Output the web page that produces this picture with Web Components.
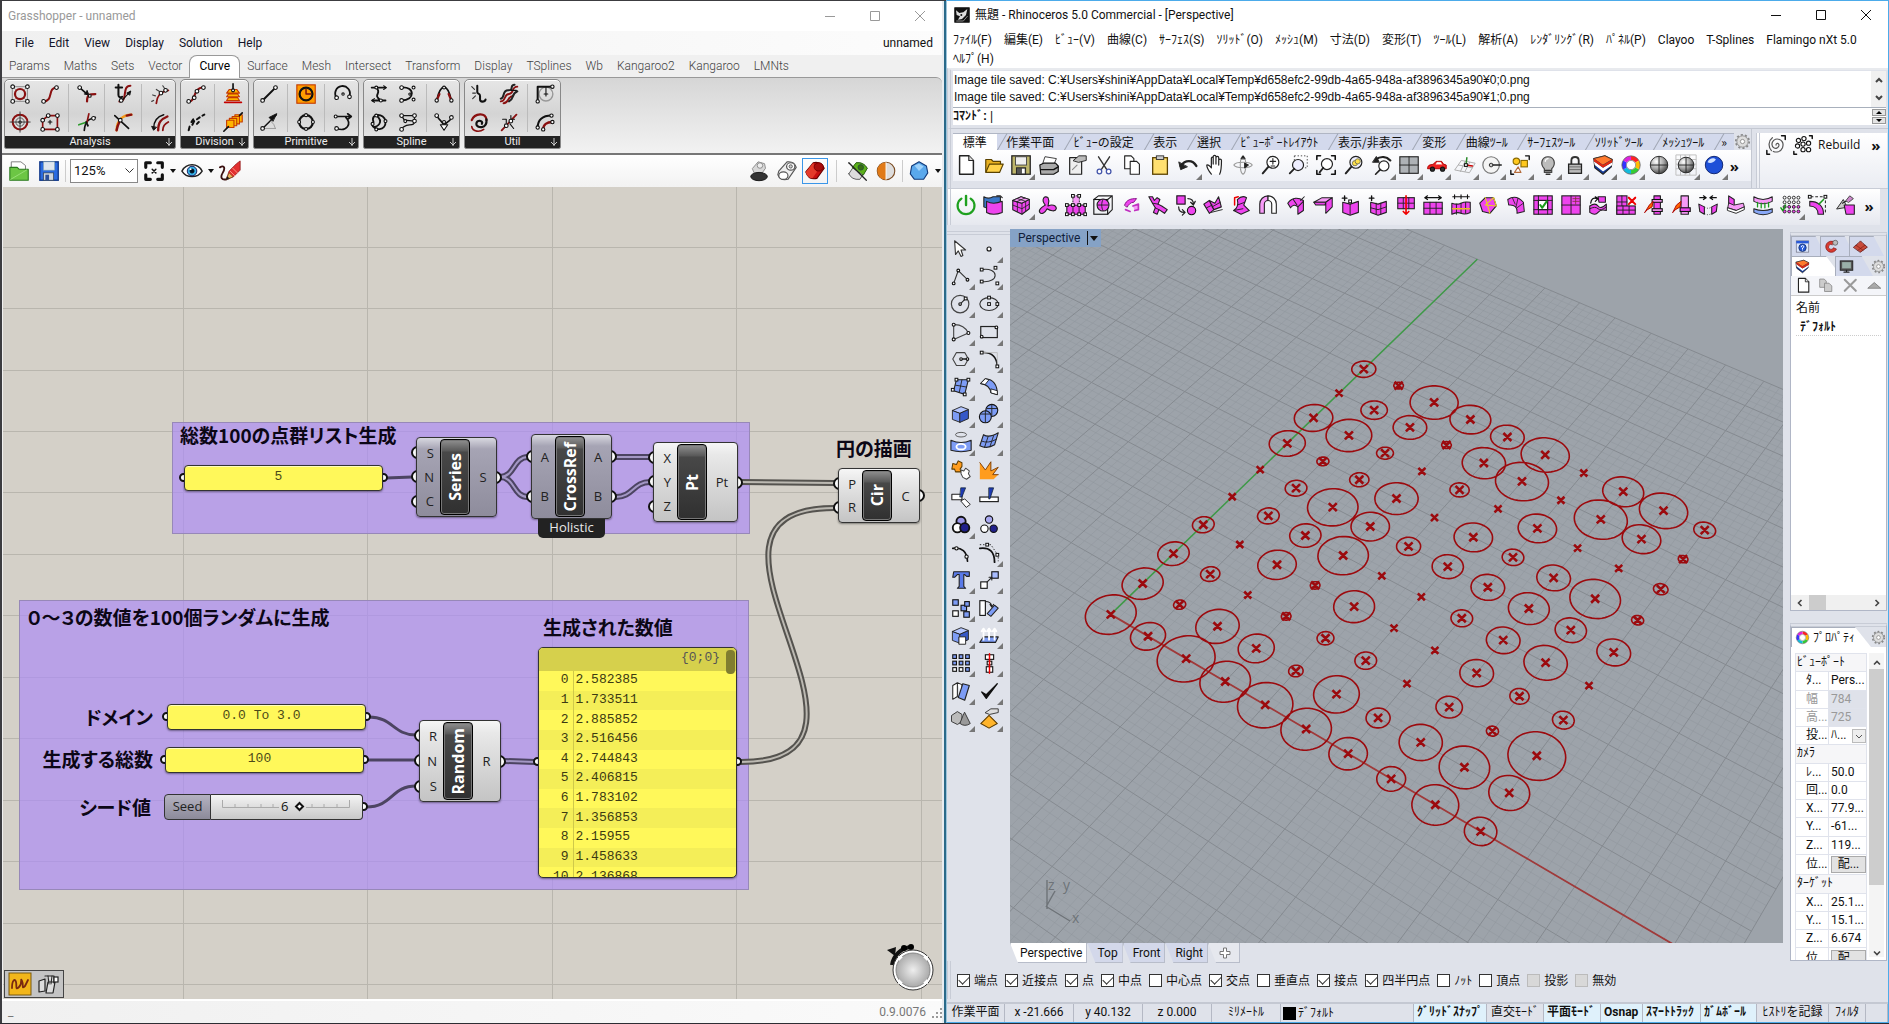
<!DOCTYPE html>
<html lang="ja">
<head>
<meta charset="utf-8">
<title>Grasshopper / Rhinoceros</title>
<style>
html,body{margin:0;height:100%}
body{display:flex;height:100vh;overflow:hidden;background:#2d2d33;font:12px/16px Roboto,"Noto Sans CJK JP",sans-serif;color:#111}
body>*{box-sizing:border-box}
gh-window{flex:1 1 946px;min-width:0}
rh-window{flex:1 1 943px;min-width:0}
</style>
</head>
<body>
<gh-window></gh-window>
<rh-window></rh-window>
<script>
/* ---------- drawing helpers for the icon set ---------- */
const P=(d,s='#111',w=1.8,f='none')=>`<path d="${d}" fill="${f}" stroke="${s}" stroke-width="${w}" stroke-linecap="round" stroke-linejoin="round"/>`;
const C=(x,y,r=2,f='#fff',s='#111',w=1.2)=>`<circle cx="${x}" cy="${y}" r="${r}" fill="${f}" stroke="${s}" stroke-width="${w}"/>`;
const R=(x,y,w,h,f='#fff',s='#111',k=1.2)=>`<rect x="${x}" y="${y}" width="${w}" height="${h}" fill="${f}" stroke="${s}" stroke-width="${k}"/>`;
const S=(x,y)=>R(x-1.5,y-1.5,3,3,'#fff','#111',1.1);
const RED='#8a1010',MG='#ee44ee',ML='#f79af7',MD='#b418b4',BL='#7d9cf5',BD='#3558c8';
const cube=(f1,f2,f3)=>P('M3 8L11 11V21L3 18Z','#222',1,f1)+P('M11 11L20 7V17L11 21Z','#222',1,f2)+P('M3 8L12 4L20 7L11 11Z','#222',1,f3);
const grid=(x,y,w,h,n,m,f=MG)=>{let o=R(x,y,w,h,f,'#222',1.2);for(let i=1;i<n;i++)o+=P(`M${x+w*i/n} ${y}V${y+h}`,'#222',1);for(let i=1;i<m;i++)o+=P(`M${x} ${y+h*i/m}H${x+w}`,'#222',1);return o};
const ICONS={
/* curve tab */
a1:P('M4 4L7 7M20 4L17 7M4 20L7 17M20 20L17 17M4 4H20V20H4Z','#888',1)+C(12,12,5.5,'none',RED,2.4)+C(4,4)+C(20,4)+C(4,20)+C(20,20),
a2:P('M5 20C16 20 9 5 19 5',RED,2.2)+C(5,20)+C(19,5),
a3:C(12,12,8,'none',RED,2.2)+C(12,12,4.5,'none','#555',1)+P('M12 1V23M1 12H23','#333',1)+C(12,12,1.2,'#fff'),
a4:P('M4 10L10 5H20V20H4Z',RED,1.8)+P('M10 12H14M12 10V14','#111',1.2)+C(4,10)+C(10,5)+C(20,5)+C(20,20)+C(4,20),
a5:P('M4 5L12 12')+P('M12 20C12 12 15 12 21 12',RED,2.4)+C(4,5)+P('M9 12L14 13L12 8','#111',1,'#111')+C(15,14,1.5),
a6:P('M9 21C10 10 14 9 21 7')+P('M12 12L3 15','#2a9a2a',1.8)+P('M12 12L14 3',RED,1.8)+C(19,8)+P('M11 12L13 16','#111',2),
a7:P('M8 20C18 20 10 3 20 3',RED,2.2)+P('M4 5H11M7 2V13C7 16 10 16 11 15','#111',2.2)+P('M10 20L20 9','#111',1.2)+P('M20 9L16 11L19 13Z','#111',1,'#111')+C(10,19),
a8:P('M5 21C5 10 12 4 21 4','#f39a1c',2.6)+P('M5 21C6 16 7 14 8 12M16 5L21 4',RED,2.6)+P('M3 5L18 19')+C(9,10),
a9:P('M8 22C9 12 14 9 21 8',RED,2)+P('M3 20L5 19M4 13L7 14M8 7L11 9M15 3L17 6','#444',1.3)+C(13,11)+C(18,8),
a10:P('M10 21C10 12 13 9 20 6',RED,2.6)+P('M5 19C5 10 9 6 16 4','#111',1.6)+P('M3 17L5 21L8 18Z','#111',1,'#111')+P('M15 21C15 16 17 14 21 12',RED,2),
b1:P('M4 20C12 21 8 5 20 5',RED,2.2)+C(4,20)+C(10,16)+C(13,9)+C(20,5),
b2:P('M4 21L5 17M8 15L10 11M13 9L16 7M19 5L21 4M7 12L9 9M13 14L15 12','#111',2.2),
b3:P('M5 19H19L17 16H7ZM5 15H19L17 12H7ZM5 11H19L16 7H8Z','#c43a00',1.2,'#ffb400')+P('M3 21H21','#c40000',2)+P('M12 8V1')+C(12,8,1.6),
b4:[0,1,2,3].map(i=>P(`M${5+i*3} ${10-i*2}H${13+i*3}V${18-i*2}H${5+i*3}Z`,'#c43a00',1.2,'#ffb400')).reverse().join('')+P('M2 22L7 17M19 5L22 2'),
c1:P('M5 19L19 5','#111',2.2)+C(5,19)+C(19,5),
c2:P('M5 19L20 4','#111',1.6)+P('M20 3L12 7L16 11Z','#111',1,'#111')+P('M5 19H19M19 19A14 14 0 0 0 14 11','#999',1)+C(5,19),
c3:R(2,2,20,20,'#ff9c00','#c43a00',1.2)+C(12,12,7,'none','#111',2.4)+P('M12 7V12H17','#7a1010',1.6),
c4:C(12,12,7.5,'none','#111',2.4)+C(12,4.5,1.6)+C(4.5,12,1.6)+C(19.5,12,1.6)+C(12,19.5,1.6),
c5:P('M5 16A8 8 0 1 1 19 14','#111',2)+C(5,16)+C(19,15)+C(12,12,1.3),
c6:P('M4 6H20M17 3L21 6L17 9M15 7C22 14 16 23 5 19')+C(5,19)+C(4,6,1.6),
d1:P('M4 5H19M19 19H5M9 5C16 12 4 12 14 19','#111',2)+P('M17 3L20 5L17 7M7 17L4 19L7 21','#111',1.2)+C(9,5,1.6)+C(14,19,1.6),
d2:P('M4 5C20 3 20 19 5 19','#111',2)+C(5,5)+C(18,5,1.6)+C(18,18,1.6)+C(5,19)+C(14,12,1.2),
d3:P('M6 12C2 2 18 2 19 11C20 22 6 22 4 14M9 5C18 12 10 18 6 17','#111',2)+C(9,5,1.6)+C(19,11,1.6)+C(9,20,1.6)+C(5,14,1.6),
d4:P('M5 20C8 12 20 18 19 11M5 5H19V11L8 10Z','#111',1.4)+C(5,5)+C(19,5)+C(19,11)+C(5,20)+C(9,11,1.6),
d5:P('M4 19C8 0 16 0 20 19')+P('M4 19L7 12M20 19L17 12',RED,2.4)+C(4,19,1.8)+C(20,19,1.8)+C(12,5,1.6),
d6:P('M4 5C8 12 12 12 12 17C12 12 16 14 20 8')+P('M8 15L12 21L16 15Z','#111',1.2,'#fff')+C(4,5)+C(20,7)+C(12,12,1.6),
e1:P('M9 3V10C9 12 12 11 12 14V18C12 21 17 21 18 18','#111',2.2)+P('M3 4L6 7M4 17L7 14M4 11H7','#333',1.2),
e2:P('M3 20C9 20 6 12 12 12S14 4 21 4M6 22C12 22 10 15 16 14',RED,2)+P('M3 17C8 16 4 8 11 8S12 2 18 2M12 20C18 17 14 12 21 9','#222',2.2)+P('M14 8L20 8','#111',1.4),
e3:P('M3 10C6 2 19 1 19 10',RED,2.4)+P('M19 9C20 20 8 19 8 14C8 9 16 10 14 14','#111',2.4)+P('M3 17C4 23 12 23 16 20',RED,1.8),
e4:P('M4 21L20 4',RED,2)+P('M5 9L9 9L9 13M18 9H14V5M13 14L17 19','#111',1.2)+C(9,16)+C(14,11),
e5:C(13,12,7.5,'none','#999',1.5)+P('M4 4H20M4 4V20','#111',2.2)+P('M11 12H15M13 5V14','#111',1.2)+C(20,4,1.8)+C(4,20,1.8),
e6:P('M4 18C4 10 9 5 19 5','#111',2.2)+P('M10 20C10 15 14 12 20 12',RED,2.6)+C(4,18,1.8)+C(19,5,1.8)+C(10,20,1.8)+C(20,12,1.8),
/* canvas toolbar */
open:P('M4 2H14L19 6V20H4Z','#777',1,'#fff')+P('M2 8H10L12 10H22V22H2Z','#2b7a1f',1.2,'#6cc644')+P('M3 21L20 11','#9be07a',1),
save:R(2,2,20,20,'#2b6be0','#123a8a',1.5)+R(6,2,12,9,'#dfe6ee','#8aa',.6)+R(6,14,11,8,'#cfd6de','#345',.8)+R(8,16,4,6,'#2b4f9a','none',0),
fit:P('M3 8V3H8M16 3H21V8M21 16V21H16M8 21H3V16','#111',3.4)+P('M10 10L14 14M14 10L10 14','#111',1.6),
eye:P('M1 12C6 3 18 3 23 12C18 20 6 20 1 12Z','#222',1.6,'#fff')+C(12,12,5.2,'#35b0e6','#115',1)+C(12,12,2.2,'#012','#012',1)+C(10.4,10,1,'#fff','none',0),
pen:P('M1 8C6 5 7 9 4 14C1 19 3 22 8 21','#3a1010',2)+P('M8 21L11 12L19 4L23 1L23 11L16 18Z','#8a1010',.8,'#e23030')+P('M15 9L20 14M12 12L17 17','#ff9a8a',1)+P('M8 21L11 14L15 18Z','#6a4a10',.6,'#e8b860')+P('M8 21L9 18L11 20Z','#111',.6,'#111'),
sh1:P('M5 9L11 2L18 4L19 9L14 16L7 14Z','#888',1,'#d8d8d8')+C(13,6,3,'#eee','#888',1)+`<ellipse cx="12" cy="18" rx="9" ry="4.5" fill="#333" stroke="#111"/>`,
sh2:P('M3 12L12 2Q20 1 22 8L13 21Q5 23 2 16Z','#555',1.2,'#eee')+`<ellipse cx="16" cy="7" rx="4.5" ry="4" fill="#fff" stroke="#555" stroke-width="1.3"/><ellipse cx="8" cy="17" rx="5" ry="4" fill="#fff" stroke="#555" stroke-width="1.3"/>`+C(16,7,1.8,'#ccc','#555',1),
sh3:P('M2 13L10 3Q18 1 22 9L14 20Q5 22 2 13Z','#600',1.2,'#c81010')+P('M2 13L10 3L14 13L9 20Q3 19 2 13Z','none',0,'#e43a2a')+`<ellipse cx="16" cy="7.5" rx="5" ry="4.5" fill="#a80c0c" stroke="#700"/>`,
sh4:P('M2 15L10 3Q18 2 22 9L14 21Q5 22 2 15Z','#555',1,'#ddd')+P('M6 8L10 3Q18 2 22 9L18 16Z','#2b6a10',1,'#5cb01a')+C(15,8,3,'#376d12','#244',.8)+P('M2 3L21 22','#222',1.4),
sh5:C(12,12,9.5,'#ddd','#7a4a20',1.2)+P('M12 2.5A9.5 9.5 0 0 0 12 21.5Z','none',0,'#e07a18')+P('M12 3V21','#fff',1),
hex:P('M12 2L20 6.5L21.5 14L17 21L7 21L2.5 15L4 6.5Z','#123a7a',1.2,'#5aa8ec')+P('M7 6L12 4L17 7L12 12Z','none',0,'#9fd2fa'),
wgt1:R(1,1,22,22,'#f2b61a','#7a5a10',1)+P('M4 16C4 8 7 6 8 10S7 19 11 15S12 5 14 9S13 18 17 14L20 8','#7a2a10',1.8),
wgt2:P('M3 9L9 7V19L3 20ZM9 4H18V11M12 10H19L17 21H10L12 10Z','#222',1.2,'#ddd')+P('M12 4L13 12M16 4L15 12','#222',1)+R(18,5,4,5,'#fff','#222'),
/* rhino logo */
rhino:R(1,1,22,22,'#111','#111',1)+P('M3 5L8 9L14 8L20 3L18 12L12 18L6 19L9 14L4 12Z','none',0,'#ddd')+C(11,12,1.5,'#111','#111',0)+P('M4 21H14L20 14','#888',1.5),
/* standard toolbar */
new:P('M5 2H15L20 7V22H5Z','#222',1.6,'#fff')+P('M15 2V7H20','#222',1.2,'#ddd'),
folder:P('M3 19V6H9L11 8H19V11','#5a4200',1.3,'#e8b020')+P('M3 20L7 11H22L18 20Z','#5a4200',1.3,'#ffd24a'),
disk:R(2,2,20,20,'#bdb56a','#222',1.4)+R(6,3,12,9,'#eee','#444',1)+R(7,15,10,7,'#555','#222',1)+R(13,16,3,5,'#fff','none',0),
print:P('M8 3L20 5L17 12H5Z','#333',1,'#fff')+P('M2 12L6 10H19L22 13V19L17 22H3Z','#111',1.3,'#aaa')+P('M3 17H17L22 14','#111',1.6),
props:P('M4 4H17V22H4Z','#222',1.3,'#eee')+P('M8 7L14 2H22V7L14 9Z','#222',1,'#bbb')+P('M7 17L12 12','#888',1.2),
cut:P('M6 3L15 17M18 3L9 17','#333',1.5)+C(7,19,2.5,'#fff','#45a',1.4)+C(17,19,2.5,'#fff','#45a',1.4),
copy:P('M4 2H11L14 5V16H4Z','#222',1.2,'#fff')+P('M10 8H17L20 11V22H10Z','#222',1.2,'#fff'),
paste:R(4,4,16,18,'#ffe070','#5a4200',1.4)+R(8,2,8,4,'#ccc','#333',1),
undo:P('M4 13C9 6 17 6 21 13','#222',2.6)+P('M2 9L4 17L11 14Z','#222',1,'#222'),
hand:P('M8 22C4 17 3 14 3 12C5 11 6 13 8 15V5C8 3 10 3 10 5V11V3C10 1 13 1 13 3V11V4C13 2 16 2 16 4V12V7C16 5 19 5 19 7C19 14 19 18 17 22','#222',1.3,'#fff'),
orbit:P('M12 2C16 4 16 20 12 22C8 20 8 4 12 2ZM2 12C4 8 20 8 22 12C20 16 4 16 2 12Z','#999',1.2)+P('M14 10L18 12L14 15ZM10 5L12 2L14 5Z','#222',1,'#222'),
zoom:C(14,9,6.5,'#fff','#222',1.3)+P('M9 14L3 21','#222',2.2)+P('M11 8H17M14 5V11M12 13H16','#222',1.2),
zoomw:`<rect x="8" y="2" width="14" height="13" fill="none" stroke="#444" stroke-dasharray="1.5 2"/>`+C(12,12,6,'#eef','#222',1.3)+P('M8 16L3 21','#222',2),
zoome:C(13,11,6,'#fff','#222',1.3)+P('M9 15L5 20','#222',2)+P('M2 6V2H6M18 2H22V6M22 18V22H18M2 18V22H6','#111',1.7),
zooms:C(14,9,6.5,'#eef','#222',1.3)+P('M9 14L3 21','#222',2.2)+C(13,10,2.8,'#ffe04a','#775',1)+C(16,8,2.8,'#ffe04a','#775',1),
zoomp:C(14,13,5.5,'#fff','#222',1.3)+P('M10 17L5 22','#222',1.8)+P('M5 6C11 2 17 3 21 7','#222',2.4)+P('M2 9L9 9L6 3Z','#222',1,'#222'),
four:grid(2,3,20,18,2,2,'#aeb2b6'),
car:P('M2 14C3 11 6 12 8 11L11 8H17L19 11L22 12V16H2Z','#a00',1,'#e22')+C(7,16.5,2.2,'#333')+C(18,16.5,2.2,'#333')+P('M11 11L12 9H16L17 11Z','#fff',.5,'#fff'),
cplane:P('M1 17L8 7L23 10L17 20ZM5 12L20 15M12 8L7 19M17 9L12 19','#aaa',1)+P('M13 12L20 13','#c00',1.6)+P('M13 12L14 4','#2a8a2a',1.6)+S(13,12),
setpt:C(11,12,9,'#f4f4f4','#777',1.3)+C(11,12,2,'#ccc','#222',1)+P('M13 12H22','#222',1.6),
shapes:C(8,8,3.5,'#ffc81e','#8a6a00')+R(13,7,7,7,'#ffc81e','#8a6a00')+P('M6 20L10 14L13 20Z','#b46a3a',1.2,'#fff')+P('M18 2H22V6M2 18V22H5','#111',1.5),
bulb:P('M8 16C3 11 5 3 12 3S21 11 16 16V20H8Z','#444',1.3,'#bcbcbc')+P('M9 18H15M10 22H14','#333',1.6)+P('M9 8C9 6 11 5 12 5','#fff',1.4),
lock:P('M8 11V7C8 2 16 2 16 7V11','#333',2)+R(5,11,14,10,'#bbb','#222',1.4)+P('M6 14H18M6 17H18','#666',1),
layer:P('M2 5L14 2L22 6L21 14L12 22L3 15Z','#222',1.2,'#123a9a')+P('M2 8L12 15L22 9V12L12 19L3 12Z','none',0,'#fff')+P('M2 5L14 2L22 6L12 12Z','#222',.6,'#ff7a2e')+P('M2 5L12 12L12 15L2 8ZM22 6L12 12V15L22 9Z','none',0,'#e02a10'),
wheel:['#f22 0','#fb0 60','#3c3 120','#1bd 180','#33f 240','#d2d 300'].map(t=>{const[c,a]=t.split(' ');return `<path d="M12 4.5A7.5 7.5 0 0 1 18.5 8.25" fill="none" stroke="${c}" stroke-width="4.5" transform="rotate(${a} 12 12)"/>`}).join('')+C(12,12,10,'none','#555',.8)+C(12,12,5,'#fff','#777',.8),
sph1:C(12,12,9.5,'url(#gs)','#222',1)+P('M12 3V21M3 12H21','#222',1),
sph2:`<path d="M1 1H23V23H1ZM1 6H23M1 11H23M1 16H23M6 1V23M11 1V23M16 1V23" fill="none" stroke="#bbb"/>`+C(12,12,8.5,'url(#gs)','#222',1)+P('M12 4V20M4 12H20','#222',1),
sph3:C(12,12,9.5,'#1e50d8','#0a1f6a',1)+P('M5 9C7 4 12 4 14 6C12 9 8 11 5 9Z','none',0,'#cfe0ff'),
gear:C(12,12,8,'#ddd','#777',1)+`<circle cx="12" cy="12" r="9.5" fill="none" stroke="#888" stroke-width="2.4" stroke-dasharray="3 3"/>`+C(12,12,3,'#fff','#777',1),
swirl:P('M12 12C12 9 16 10 15 13C13 18 6 15 8 9C11 2 22 6 19 15C17 20 12 20 9 19M7 18C3 14 4 7 8 4','#555',1.3)+P('M18 2H22V6M2 18V22H5','#111',1.6),
dots:C(7,7,2.3)+C(13,5,2.3)+C(6,13,2.3)+C(12,11,2.3)+C(18,10,2.3)+C(12,17,2.3)+C(18,17,2.3)+P('M19 2H22V5M2 19V22H5','#111',1.6),
/* t-splines toolbar */
t1:P('M7 5A9.2 9.2 0 1 0 17 5','#1ea01e',2.4)+P('M12 2V12','#1ea01e',2.6),
t2:P('M2 3Q7 6 12 3L20 3V12L8 16Q4 15 2 14Z','#222',1.2,'#3c78c8')+P('M5 8Q12 12 22 8V20Q12 24 5 20Z','#222',1.2,MG)+P('M16 2H20L22 4','#222',1.2),
t3:P('M3 7L12 3L21 6V16L13 22L3 17Z','#222',1.2,MG)+P('M3 7L12 3L21 6L13 10Z','#222',1,ML)+P('M3 7L13 10L21 6M13 10V22M3 12L13 16L21 11M8 8.5V19M17 8V19M8 5L17 8M7 8.5L16 4.5','#222',.9),
t4:P('M9 12C4 6 8 1 12 4C14 8 12 11 12 13C16 11 21 12 21 16C20 20 14 18 11 16C9 20 5 23 3 20C1 17 6 14 9 12Z','#222',1.2,MG),
t5:grid(2,12,20,10,3,1)+`<rect x="8.6" y="2" width="7" height="10" fill="${ML}" stroke="#222" stroke-dasharray="2 1"/>`+[2,8.6,15.4,22].map(x=>S(x,12)+S(x,22)).join('')+S(8.6,2)+S(15.4,2),
t6:R(2,6,15,16,'none')+P('M2 6L7 2H22V17L17 22M17 6L22 2','#222',1.2)+C(12,12,6.5,MG,'#222',1.2)+P('M6 12H18M12 6C10 9 10 15 12 18','#222',1),
t7:P('M5 12C7 6 12 5 18 5L15 9C11 9 9 12 8 14Z','#801080',1,MG)+P('M14 13L20 11V17L16 18M6 17L11 19','#c030c0',1.8,ML),
t8:P('M2 3L6 3L8 7L11 4L14 6L12 11L16 13L22 17L19 21L13 17L11 22L7 20L9 15L6 10Z','#222',1.2,MG)+P('M6 10L12 11M9 15L13 17','#222',1),
t9:R(2,2,9,9,MG)+C(18,18,4.5,MG)+P('M14 5Q20 5 20 11M17 9L20 12L22 8M4 14Q4 20 10 20M8 17L11 20L8 23','#222',1.3),
t10:P('M2 11L8 7L13 17L8 21Z','#222',1.2,MG)+P('M8 7L14 10L18 3L21 14L13 17Z','#222',1.2,MG)+P('M5 15L11 12M11 14L20 9M10 20L22 17','#222',1),
t11:P('M4 18Q10 14 8 6Q13 1 18 4L15 12L21 18L12 22Z','#222',1.2,MG)+P('M8 12L16 9M4 18L14 16','#222',1)+P('M5 12V4L9 3','#e00',1.6),
t12:P('M3 21V11A9 9 0 0 1 12 2V7A4 4 0 0 0 8 11V21Z','#222',1.2,ML)+P('M21 21V11A9 9 0 0 0 12 2V7A4 4 0 0 1 16 11V21Z','#222',1.2,'#fff'),
t13:P('M3 10C8 3 15 4 20 7V18L14 22V14C11 11 8 12 6 15Z','#222',1.2,MG)+P('M9 6L13 12M14 14L20 8M17 7L21 3','#222',1.1),
t14:P('M2 9L11 4H22L15 9Z','#222',1.1,ML)+P('M2 9H15L14 12H4ZM15 9L22 4V14L15 21Z','#222',1.1,MG),
t15:P('M3 9L11 11L20 8V20L11 23L3 20Z','#222',1.2,MG)+P('M11 11V22','#222',1)+P('M5 2V7M2.5 4.5H7.5','#111',1.5)+S(11,8),
t16:P('M4 9L12 11L21 8V20L12 23L4 20Z','#222',1.2,MG)+P('M10 10V22M15 10V22M4 15L12 17L21 14','#222',1)+P('M5 2V7M2.5 4.5H7.5','#111',1.5),
t17:grid(3,4,18,12,3,2)+P('M12 2V22M9 19L12 22L15 19','#e00',1.8),
t18:grid(2,9,20,13,3,2)+P('M4 4H20M6 2L3 4L6 6M18 2L21 4L18 6','#111',1.3),
t19:P('M2 10Q8 12 12 10T22 9V20Q16 23 12 21T2 22Z','#222',1.2,MG)+P('M7 11V22M12 10V21M17 9V21','#222',1)+P('M3 16H21','#e8c020',1.6)+P('M3 3H21M5 1V5M12 1V5M19 1V5','#111',1.2),
t20:P('M3 10L9 4H18L21 13L14 21L6 19Z','#222',1.2,MG)+P('M9 4L14 21M9 12L18 4L21 13L9 12','#e8d020',1.2),
t21:P('M3 6Q12 0 20 9L21 19L13 21Q14 11 4 12Z','#222',1.1,MG)+P('M8 4L11 11M14 5L12 14M20 10L13 15','#222',.9),
t22:grid(2,2,20,20,1,1)+R(7,7,10,10,'#fff')+P('M2 7H22M2 17H22M7 2V22M17 2V22','#222',1)+P('M9 12L11 15L16 8','#1a9a1a',2.2),
t23:grid(2,2,20,20,2,2)+P('M14 5H21M14 8H21M17 3V11','#733',.8),
t24:P('M3 13Q9 9 12 13T21 11V18Q15 16 12 20T3 20ZM12 3H20V9H13Z','#222',1.2,MG)+P('M3 16Q9 13 12 16T21 14','#222',1)+P('M4 10Q5 3 11 5M9 3L12 5L9 8','#111',1.3),
t25:grid(2,2,11,20,2,3)+grid(2,13,20,9,3,2)+P('M15 4L22 11M22 4L15 11','#e00',2.2),
t26:P('M13 2H20V22H13Z','#222',1.2,MG)+R(11,6,11,3,ML)+R(11,16,11,3,ML)+P('M3 20L8 12L12 8L11 14L6 17Z','#a00',1,'#f60'),
t27:P('M12 2H20V22H12Z','#222',1.2,ML)+R(11,15,11,4,MG)+P('M3 20L7 12L12 8L11 14L6 17Z','#a00',1,'#f60'),
t28:P('M2 11L8 14V22L3 19ZM22 11L16 14V22L21 19Z','#222',1.2,MG)+`<path d="M8 14Q12 17 16 14M8 21Q12 24 16 21" fill="none" stroke="#222" stroke-dasharray="1 2"/>`+P('M3 4H9M7 2L10 4L7 6M21 4H15M17 2L14 4L17 6','#111',1.3),
t29:P('M4 2L10 6V14L4 10Z','#222',1.2,MG)+P('M10 12L20 10L21 14L13 18L3 15L4 10Z','#222',1,ML)+P('M3 15L12 18L21 14V17L12 21L3 18Z','#222',1,'#fff'),
t30:P('M2 3Q12 9 22 3V8Q12 13 2 8Z','#222',1.1,ML)+P('M2 16Q12 20 22 16V20Q12 25 2 20Z','#222',1.1,'#88a8f8')+P('M6 9V14M10 10V15M14 10V15M18 9V14','#1a9a1a',1.4),
t31:[0,1,2,3].map(i=>[0,1,2,3].map(j=>C(5+i*5,4+j*5,1.6,j>1?MG:'#fff','#222',1)).join('')).join('')+P('M1 15L3 18L6 12','#1a9a1a',1.6),
t32:P('M3 8C12 8 18 13 18 22H12C12 17 9 13 3 13Z','#222',1.2,MG)+`<path d="M4 3H20V20" fill="none" stroke="#111" stroke-dasharray="3 2"/>`+S(3,3)+S(20,3)+P('M13 11L18 6','#1a9a1a',1.6),
t33:P('M2 16L9 6L13 14Z','#222',1,'#ccc')+P('M10 12H21V22H12Z','#222',1.2,MG)+P('M12 7L16 2L20 5L15 9Z','#444',1,'#c8c')+P('M8 10L12 8','#222',1.2),
/* side toolbar */
s1:P('M5 3L6 18L9 14L12 20L14 19L12 13H17Z','#333',1.2,'#fff'), s2:C(12,12,2.2),
s3:P('M4 20L9 6L19 16','#333',1.2)+C(4,20,1.5)+C(9,6,1.5)+C(19,16,1.5), s4:P('M4 5C23 2 24 20 4 18','#333',1.2)+S(4,5)+S(19,3)+S(4,18)+S(21,20),
s5:C(11,12,9.5,'none','#444',1.3)+P('M11 12L17 6','#222',1.2)+C(11,12,1.4)+S(17,6), s6:`<ellipse cx="12" cy="12" rx="10" ry="7" fill="none" stroke="#333" stroke-width="1.2"/>`+S(12,5)+S(12,12)+S(21,12),
s7:P('M4 4V20L20 13A17 17 0 0 0 4 4','#444',1.2)+C(4,4,1.6)+C(4,20,1.6)+C(20,13,1.6), s8:R(3,6,18,12,'none','#222',1.3)+C(4,17,1.5)+C(20,7,1.5),
s9:P('M3 12L7 5H16L20 12L16 19H7Z','#444',1.2)+P('M12 12H19','#222',1.6)+C(12,12,1.4)+C(19,12,1.4), s10:P('M4 5Q20 4 21 20','#111',1.8)+P('M4 5H21V20','#bbb',1)+S(4,5)+S(21,20),
s11:P('M7 4L20 4L16 20L4 16Z','#222',1.2,BL)+P('M13 4L10 18M6 10L18 12','#222',1)+S(7,4)+S(20,4)+S(16,20)+S(3,15), s12:P('M3 8L8 3Q21 4 21 20L14 18Q13 10 3 8Z','#222',1.2,BL)+P('M3 8L8 3L12 4L8 9Z','#222',1,'#fff')+P('M14 18V14L21 16V20Z','#222',1,'#fff'),
s13:cube(BL,BD,'#b4c6ff'), s14:C(15,8,6.5,BL)+C(8,15,6.5,BL)+P('M3 12H14M8 9V21M10 6H21M15 2V13','#222',1),
s15:`<ellipse cx="12" cy="4" rx="6" ry="2.5" fill="none" stroke="#555"/>`+P('M1 10Q12 15 23 10V21Q12 24 1 21Z','#222',1.2,BL)+`<ellipse cx="12" cy="17" rx="5" ry="3" fill="${BL}" stroke="#fff" stroke-width="2"/>`, s16:P('M6 4Q12 8 22 2L18 15Q10 20 2 16Z','#222',1.2,BL)+P('M11 6L7 18M17 5L13 17M4 11Q11 14 20 9','#222',1),
s17:P('M3 5L7 6L9 2L13 4L13 8L11 11L12 14L6 14L5 11L2 11Z','#5a3a00',1.1,'#ff9c1e')+P('M12 12L15 13L17 10L21 13L20 16L22 19L18 22L14 20L12 16Z','#444',1.1,'#fff'), s18:P('M2 22V4L8 12L14 3L14 13L22 9L16 17H22L17 22Z','none',0,'#ff9c1e')+P('M2 4L8 12L14 3L14 13L22 9L16 17H22','#7a3a00',1),
s19:P('M2 9H13V15H2Z','#222',1.2,'#fff')+P('M12 16L16 14L22 20L18 23Z','#222',1,'#fff')+P('M12 2H17L13 12H11Z','#123',.8,'#1e3ab4'), s20:R(2,12,20,5)+P('M12 2H17L13 14H12Z','#123',.8,'#1e3ab4'),
s21:C(12,8,5,'#9a96e8','#111',2)+C(8,15,5,'#fff','#111',2)+C(16,15,5,'#20208a','#111',2), s22:C(12,6,4,'#a8a8f0')+C(7,16,4)+C(17,16,4,'#20208a'),
s23:P('M3 8Q18 6 19 22','#111',1.8)+C(7,8,1.8)+C(18,17,1.8), s24:P('M2 8Q18 6 18 23','#111',2)+`<path d="M2 4H14L22 16V22" fill="none" stroke="#222" stroke-dasharray="1.5 2"/>`+S(10,4)+S(21,15),
s25:P('M3 9L4 3H21V8H18L16 6H15V19L17 21H8L10 19V6H8L5 9Z','#222',1.2,'#5a7ae8'), s26:R(3,14,7,7)+R(15,3,7,7,'#a8bcff')+P('M10 14L15 9M12 9H15V12','#222',1.2),
s27:R(3,3,6,6,BL)+R(3,15,6,6)+R(12,9,6,6,BL)+R(16,5,5,5,BL)+R(15,16,6,6,BL), s28:R(2,4,6,16)+P('M8 5Q14 5 15 10M13 8L15 11L17 8','#222',1.1)+P('M10 18L18 9L22 12L14 21Z','#222',1.1,BL),
s29:cube(BL,BD,'#b4c6ff')+P('M10 14H17V22H10Z','#222',1,'#fff'), s30:P('M2 20L6 14H22L19 20Z','#222',1.2,BL)+P('M6 17V6M12 17V6M18 17V6M4 8L6 5L8 8M10 8L12 5L14 8M16 8L18 5L20 8','#fff',2),
s31:[0,1,2].map(i=>[0,1,2].map(j=>R(3+i*7,3+j*7,4,4,(i<2&&j>1)?'#fff':BL)).join('')).join(''), s32:R(8,3,9,5)+R(10,10,5,4)+R(9,16,7,6)+P('M12.5 2V23','#e00',1.6),
s33:P('M3 6L8 3V18L3 21ZM8 3L13 5V18','#222',1.1,'#fff')+P('M14 4L21 6L16 22L9 19Z','#222',1.2,BL), s34:P('M4 13L9 20L21 4L9 16Z','#111',1.4,'#111'),
s35:P('M2 9L8 5L13 8V16L8 19L2 16Z','#333',1,'#bbb')+P('M16 6L22 18Q16 22 11 18Z','#333',1,'#999'), s36:P('M3 18L12 9L21 18L12 23Z','#5a3a00',1.1,'#ffb42a')+P('M8 6L14 2H22V6L13 8Z','#333',1,'#ddd'),
/* docked panel */
help:R(2,3,20,18,'#dde8ff','#667',1)+R(2,3,20,4,'#2a5ad8','none',0)+C(12,14,6,'#2458d8','#124',1)+P('M10 12.5Q10 10.5 12 10.5T14 12.5Q14 13.6 12 14.4V15.4M12 17.4V17.6','#fff',1.6),
magnet:P('M17 5A9 9 0 1 0 20 16L15 14A4 4 0 1 1 13 9Z','#7a1010',1,'#d83a30')+C(18,6,4,'#bbb','#444',1),
patch:P('M1 13L8 7L12 3L16 7L23 13L12 21Z','#5a1010',1.2,'#c84a3a')+P('M5 10L16 18M19 10L8 18','#7a1a10',1),
screen:R(2,3,20,15,'#555','#222',1.5)+R(5,5,14,10,'#9ab0a8','none',0)+P('M8 21H16M12 18V21','#222',2),
dup:P('M3 3H9L12 6V15H3Z','#888',1.2,'#ccc')+P('M10 9H16L20 13V21H10Z','#888',1.2,'#ccc'),
del:P('M4 4L20 20M20 4L4 20','#9a9a9a',3), up:P('M3 16L12 8L21 16Z','#777',1.2,'#aaa')
};
const DEFS='<defs><radialGradient id="gs" cx=".35" cy=".3" r=".8"><stop offset="0" stop-color="#fff"/><stop offset=".5" stop-color="#aaa"/><stop offset="1" stop-color="#333"/></radialGradient></defs>';
const svg=n=>`<svg viewBox="0 0 24 24" aria-hidden="true">${DEFS}${ICONS[n]||''}</svg>`;

/* one place to register an element from its style and markup */
function element(name,css,html){
  const t=document.createElement('template');
  customElements.define(name,class extends HTMLElement{
    connectedCallback(){
      if(this.shadowRoot)return;
      const root=this.attachShadow({mode:'open'});
      t.innerHTML=`<style>*{box-sizing:border-box}button,input,select{font:inherit;color:inherit}button{border:0;background:none;padding:0;margin:0}${css}</style>${typeof html==='function'?html(this):html}`;
      root.append(t.content.cloneNode(true));
    }
  });
}

element('ui-icon',':host{display:inline-block;width:20px;height:20px;flex:none}svg{display:block;width:100%;height:100%}',e=>svg(e.getAttribute('name')));
element('tool-button',`:host{display:block;width:24px;height:24px;flex:none}
button{position:relative;display:grid;place-items:center;width:100%;height:100%}
svg{width:92%;height:92%}
:host([fly]) button::after{content:"";position:absolute;right:-2px;bottom:-2px;border:3px solid transparent;border-right-color:#777;border-bottom-color:#777}`,
e=>`<button type="button" aria-label="${e.getAttribute('icon')}">${svg(e.getAttribute('icon'))}</button>`);
element('window-buttons',`:host{display:flex;margin-left:auto;color:var(--c,#999)}
button{width:45px;height:28px;display:grid;place-items:center}svg{width:12px;height:12px}`,
`<button aria-label="minimize"><svg viewBox="0 0 12 12"><path d="M1 6.5H11" stroke="currentColor"/></svg></button>
<button aria-label="maximize"><svg viewBox="0 0 12 12"><path d="M1.5 1.5H10.5V10.5H1.5Z" fill="none" stroke="currentColor"/></svg></button>
<button aria-label="close"><svg viewBox="0 0 12 12"><path d="M1 1L11 11M11 1L1 11" fill="none" stroke="currentColor"/></svg></button>`);

/* ================= Grasshopper ================= */
element('gh-window',`:host{display:flex;flex-direction:column;height:calc(100vh - 1px);background:#f0f0f0;border:1px solid #3c3c40;border-left-width:2px;border-right:0;border-bottom:0;box-shadow:inset -2px 0 #2a6a8a,inset -4px 0 #e8ecf0;padding-right:4px}
header{display:flex;align-items:center;height:30px;background:#fff;padding-left:6px;color:#999;flex:none}
nav{display:flex;align-items:center;height:24px;flex:none;padding:0 9px 0 13px;gap:15px;background:linear-gradient(90deg,#f0f0f0,#fcfcfc)}
nav a{color:#15152a;text-decoration:none}nav span{margin-left:auto}
gh-canvas{flex:1;min-height:0;margin-left:1px}
footer{display:flex;align-items:center;justify-content:space-between;height:24px;flex:none;border-top:2px solid #fff;background:linear-gradient(90deg,#f0f0f0,#fafafa);color:#777;padding-left:6px}
footer b{font-weight:400;display:flex;gap:5px;align-items:center}footer svg{width:11px;height:11px}`,
`<header>Grasshopper - unnamed<window-buttons></window-buttons></header>
<nav>${['File','Edit','View','Display','Solution','Help'].map(t=>`<a href="#">${t}</a>`).join('')}<span>unnamed</span></nav>
<gh-tabs></gh-tabs><gh-ribbon></gh-ribbon><gh-toolbar></gh-toolbar><gh-canvas></gh-canvas>
<footer><span>_</span><b>0.9.0076 <svg viewBox="0 0 11 11"><path d="M9 1h2v2H9zM9 5h2v2H9zM9 9h2v2H9zM5 5h2v2H5zM5 9h2v2H5zM1 9h2v2H1z" fill="#999"/></svg></b></footer>`);

element('gh-tabs',`:host{display:flex;height:22px;flex:none;align-items:flex-end}
button{height:22px;padding:0 7px;font-weight:300;color:#444}
button.on{background:#fff;border:1px solid #999;border-bottom:0;border-radius:8px 8px 0 0;color:#000;height:23px;font-weight:400;padding:0 9px 3px;margin-bottom:-1px;z-index:1}`,
['Params','Maths','Sets','Vector','Curve','Surface','Mesh','Intersect','Transform','Display','TSplines','Wb','Kangaroo2','Kangaroo','LMNts'].map(t=>`<button${t==='Curve'?' class="on"':''}>${t}</button>`).join(''));

const RIBBON=[['Analysis',[['a1','a3'],['a2','a4'],'|',['a5','a6'],'|',['a7','a8'],'|',['a9','a10']],172],['Division',[['b1','b2'],'|',['b3','b4']],69],['Primitive',[['c1','c2'],'|',['c3','c4'],'|',['c5','c6']],106],['Spline',[['d1','d3'],['d2','d4'],'|',['d5','d6']],97],['Util',[['e1','e3'],['e2','e4'],'|',['e5','e6']],97]];
element('gh-ribbon',`:host{display:flex;gap:4px;height:78px;flex:none;padding:1px 2px 0;background:linear-gradient(#d6d6d6,#f2f2f2);border-top:1px solid #999;border-radius:0 6px 0 0;border-bottom:2px solid #777}`,
RIBBON.map(([n,c,w])=>`<ribbon-group label="${n}" style="flex:0 0 ${w}px">${c.map(k=>k==='|'?'<i></i>':`<div>${k.map(i=>`<tool-button icon="${i}"></tool-button>`).join('')}</div>`).join('')}</ribbon-group>`).join(''));
element('ribbon-group',`:host{display:flex;flex-direction:column;height:70px;border:1px solid #888;border-radius:5px 5px 2px 2px;background:linear-gradient(#e6e6e6,#d4d4d4 50%,#ececec);overflow:hidden;box-shadow:inset 0 1px #fff}
.c{flex:1;display:flex;justify-content:space-around;align-items:center}
::slotted(div){display:flex;flex-direction:column;gap:4px}::slotted(i){width:1px;height:48px;background:#bbb}
footer{position:relative;background:#222;color:#eee;font-size:11px;line-height:12px;height:12px;text-align:center;flex:none}
footer svg{position:absolute;right:2px;top:2px;width:8px;height:8px}`,
e=>`<div class="c"><slot></slot></div><footer>${e.getAttribute('label')}<svg viewBox="0 0 8 8"><path d="M4 0V8M1 4L4 7L7 4" stroke="#ccc" fill="none"/></svg></footer>`);

element('gh-toolbar',`:host{display:flex;align-items:center;height:32px;flex:none;padding:0 1px 0 4px;background:linear-gradient(#fff,#f2f2f2);margin-left:1px;gap:4px}
.z{position:relative;display:flex;height:24px;width:68px;border:1px solid #888;background:#fff}
select{appearance:none;border:0;background:none;width:100%;padding-left:3px;font-size:13px}
.z svg{position:absolute;right:3px;top:8px;width:9px;height:6px;pointer-events:none}
s{width:1px;height:22px;background:#ccc}
em{border:3px solid transparent;border-top:4px solid #111;border-bottom:0}
.sel{outline:1px solid #3a96e8}.g{margin-left:auto;display:flex;align-items:center;gap:4px}.g .sel+s{margin:0 5px}`,
`<tool-button icon="open"></tool-button><tool-button icon="save" style="margin-left:2px"></tool-button><s></s>
<label class="z" aria-label="zoom"><select><option>125%</option></select><svg viewBox="0 0 9 6"><path d="M.5.5L4.5 4.5L8.5.5" fill="none" stroke="#333"/></svg></label>
<tool-button icon="fit"></tool-button><em></em><tool-button icon="eye"></tool-button><em></em><tool-button icon="pen"></tool-button>
<span class="g"><tool-button icon="sh1"></tool-button><tool-button icon="sh2"></tool-button><tool-button class="sel" icon="sh3"></tool-button><s></s><tool-button icon="sh4"></tool-button><tool-button icon="sh5"></tool-button><s></s><tool-button icon="hex"></tool-button><em></em></span>`);

const single=['M383 291L409 290','M366 530C390 530 390 548 413 548','M363 573H413','M363 620C390 620 388 599 413 599'].join('');
const inner=['M497 290C512 290 510 270 525 270','M497 290C512 290 510 310 525 310','M613 270H647','M613 310C630 310 630 295 647 295','M502 574L532 575'].join('');
const outer=['M738 295L831 296','M738 575C918 575 651 321 831 321'].join('');
element('gh-canvas',`:host{position:relative;display:block;overflow:hidden;background:#d4d0c8}
svg.bg{position:absolute;inset:0;width:100%;height:100%}
gh-label,gh-panel,gh-node,gh-slider,gh-list{position:absolute}
.w{position:absolute;left:1px;bottom:1px;display:flex;gap:4px;padding:1px 3px;background:#c4c4c4;border:1px solid #444}
.w ui-icon{width:24px;height:24px}
.k{position:absolute;right:3px;bottom:5px;width:52px;height:50px}
.grp{position:absolute;background:rgba(172,138,246,.68);border:1px solid #9788b8}`,
`<svg class="bg"><g stroke="#b9b6ae" stroke-width="1"><path fill="none" d="${[180,364,549,733,918].map(x=>`M${x}.5 0V820`).join('')}${[60,121,183,244,305,367,428,490,551,613,674,736,797].map(y=>`M0 ${y}.5H950`).join('')}"/></g></svg>
<div class="grp" style="left:169px;top:235px;width:578px;height:112px"></div>
<div class="grp" style="left:16px;top:413px;width:730px;height:290px"></div>
<svg class="bg" fill="none"><path d="${single}" stroke="#4c4462" stroke-width="3"/><path d="${inner}" stroke="#4c4462" stroke-width="6"/><path d="${inner}" stroke="#a397c4" stroke-width="2"/><path d="${outer}" stroke="#55534f" stroke-width="6"/><path d="${outer}" stroke="#bcb9b2" stroke-width="2"/></svg>
<gh-label style="left:177px;top:236px">総数100の点群リスト生成</gh-label>
<gh-label style="left:24px;top:418px">０～３の数値を100個ランダムに生成</gh-label>
<gh-label style="left:540px;top:428px">生成された数値</gh-label>
<gh-label style="left:833px;top:249px">円の描画</gh-label>
<gh-label style="right:789px;top:518px">ドメイン</gh-label>
<gh-label style="right:789px;top:560px">生成する総数</gh-label>
<gh-label style="right:791px;top:608px">シード値</gh-label>
<gh-panel style="left:181px;top:278px">5</gh-panel>
<gh-panel style="left:164px;top:517px">0.0 To 3.0</gh-panel>
<gh-panel style="left:162px;top:560px">100</gh-panel>
<gh-slider style="left:161px;top:607px"></gh-slider>
<gh-node style="left:413px;top:250px;width:81px;height:80px" name="Series" in="S,N,C" out="S" dark></gh-node>
<gh-node style="left:528px;top:247px;width:81px;height:85px" name="CrossRef" in="A,B" out="A,B" dark foot="Holistic"></gh-node>
<gh-node style="left:650px;top:255px;width:85px;height:80px" name="Pt" in="X,Y,Z" out="Pt"></gh-node>
<gh-node style="left:835px;top:281px;width:82px;height:55px" name="Cir" in="P,R" out="C"></gh-node>
<gh-node style="left:416px;top:533px;width:82px;height:82px" name="Random" in="R,N,S" out="R"></gh-node>
<gh-list style="left:535px;top:460px"></gh-list>
<div class="w"><ui-icon name="wgt1"></ui-icon><ui-icon name="wgt2"></ui-icon></div>
<svg class="k" viewBox="0 0 52 50"><path d="M0 6L9 3L8 12Z" fill="#111"/><path d="M5 21A21 21 0 0 1 24 3" fill="none" stroke="#111" stroke-width="4"/><circle cx="17" cy="4" r="3"/><circle cx="24" cy="3" r="3"/><defs><radialGradient id="k"><stop offset="0" stop-color="#eee"/><stop offset="1" stop-color="#aaa"/></radialGradient></defs><circle cx="26" cy="26" r="20" fill="#fff" stroke="#333"/><circle cx="26" cy="26" r="17" fill="url(#k)" stroke="#888"/><path d="M11 12L16 13L12 17ZM41 12L36 13L40 17ZM11 40L16 39L12 35ZM41 40L36 39L40 35Z" fill="#fff"/></svg>`);
element('gh-label',`:host{display:block;font:700 19px/24px "Noto Sans CJK JP",sans-serif;font-feature-settings:"palt";color:#0c0716;white-space:nowrap}`,'<slot></slot>');
const port=`.p{position:absolute;width:9px;height:9px;border:2px solid #111;border-radius:50%;background:#fff;z-index:-1}`;
element('gh-panel',`:host{display:block;width:199px;height:26px;z-index:0}
.b{height:100%;border:1px solid #333;border-radius:4px;background:#fff85a;box-shadow:inset 0 1px #fffcc0,0 1px 2px #0006;text-align:center;padding-right:10px;font:13px/22px "Liberation Mono",monospace;color:#4c4a18}
${port}.l{left:-5px;top:8px}.r{right:-5px;top:8px}`,
'<i class="p l"></i><i class="p r"></i><div class="b"><slot></slot></div>');
element('gh-slider',`:host{display:flex;width:199px;height:26px;z-index:0;font:13px/22px "Open Sans",sans-serif}
label{width:47px;border:1px solid #333;border-radius:4px 0 0 4px;background:linear-gradient(#b4b2c0,#8c8a9a);text-align:center;color:#222}
.t{position:relative;flex:1;border:1px solid #333;border-left:0;border-radius:0 4px 4px 0;background:linear-gradient(#f4f4f4,#c8c8c8)}
svg{position:absolute;left:11px;top:5px;width:128px;height:8px}
output{position:absolute;left:70px;top:0}
input{position:absolute;left:6px;top:1px;width:138px;height:20px;margin:0;appearance:none;background:none}
input::-webkit-slider-thumb{appearance:none;width:7px;height:7px;border:2px solid #111;background:#fff;transform:rotate(45deg)}
${port}.r{right:-5px;top:8px}`,
`<i class="p r"></i><label for="s">Seed</label><div class="t"><svg viewBox="0 0 128 8"><path d="M.5 0V7.5H57M84 7.5H127.5V0M13 4V7M26 4V7M39 4V7M51 4V7M90 4V7M102 4V7M115 4V7" fill="none" stroke="#aaa"/></svg><output>6</output><input id="s" type="range" min="0" max="10" value="6"></div>`);
element('gh-node',`:host{display:block;z-index:0;font:13px/16px "Open Sans",sans-serif;color:#222}
.b{display:flex;width:100%;height:100%;border:1px solid #333;border-radius:4px;background:linear-gradient(#f6f6f6,#e8e8e8 12px,#c4c4c4);box-shadow:0 1px 2px #0006;padding:1px 0}
:host([dark]) .b{background:linear-gradient(#d8d8e0,#a6a4b4 11px,#8e8c9c)}
.col{display:flex;flex-direction:column;justify-content:space-around;padding:2px 0}
.in{width:23px;text-align:right;padding-right:6px}.out{flex:1;text-align:center}
.n{width:30px;border:1px solid #000;border-radius:4px;background:linear-gradient(#909090,#585858 11px,#484848 12px,#303030);box-shadow:inset 0 0 0 1px #777;display:grid;place-items:center}
.n b{writing-mode:vertical-rl;transform:rotate(180deg);color:#fff;font-size:16px;line-height:20px;font-weight:700}
.ps{position:absolute;top:3px;bottom:3px;display:flex;flex-direction:column;justify-content:space-around;z-index:-1;align-items:center}
.ps.l{left:-5px}.ps.r{right:-5px}.ps i{height:16px;display:flex;align-items:center}
.ps i::before{content:"";width:9px;height:9px;border:2px solid #111;border-radius:50%;background:#fff}
.f{position:absolute;left:7px;top:100%;width:67px;height:19px;background:#222;color:#e8e8e8;border-radius:0 0 5px 5px;text-align:center}`,
e=>{const a=e.getAttribute('in').split(','),o=e.getAttribute('out').split(','),f=e.getAttribute('foot');
return `<div class="ps l">${a.map(()=>'<i></i>').join('')}</div><div class="ps r">${o.map(()=>'<i></i>').join('')}</div><div class="b"><div class="col in">${a.map(t=>`<span>${t}</span>`).join('')}</div><div class="n"><b>${e.getAttribute('name')}</b></div><div class="col out">${o.map(t=>`<span>${t}</span>`).join('')}</div></div>${f?`<div class="f">${f}</div>`:''}`});
element('gh-list',`:host{display:block;width:199px;height:231px;z-index:0}
.b{position:relative;height:100%;border:1px solid #333;border-radius:5px;background:#fff85a;overflow:hidden;font:13px/16px "Liberation Mono",monospace;color:#3c3a12;box-shadow:0 1px 2px #0006}
header{height:23px;background:#d6d04c;text-align:right;padding:2px 16px;color:#555}
table{border-collapse:collapse;width:100%;height:216px}td{padding:0 2px 1px}td:first-child{width:34px;text-align:right;border-right:1px solid #cfc94a;padding-right:4px}
tr:nth-child(even){background:#f4ee58}
u{position:absolute;right:1px;top:2px;width:9px;height:24px;border-radius:4px;background:#807d30}
${port}.l{left:-5px;top:110px}.r{right:-5px;top:110px}`,
`<i class="p l"></i><i class="p r"></i><div class="b"><header>{0;0}</header><table>${['2.582385','1.733511','2.885852','2.516456','2.744843','2.406815','1.783102','1.356853','2.15955','1.458633','2.136868'].map((v,i)=>`<tr><td>${i}</td><td>${v}</td></tr>`).join('')}</table><u></u></div>`);

/* ================= Rhinoceros ================= */
element('rh-window',`:host{display:flex;flex-direction:column;height:calc(100vh - 1px);background:#dfe2ea;border:1px solid #4cabea;border-left-color:#9cc4dc;--c:#111}
header{display:flex;align-items:center;gap:5px;height:28px;background:#fff;padding-left:7px;flex:none}header ui-icon{width:16px;height:16px}
nav{display:flex;flex-wrap:wrap;background:#fff;padding:2px 8px 0 6px;column-gap:12px;height:39px;line-height:19px;flex:none;align-content:flex-start}nav a{color:#111;text-decoration:none}
nav a:last-child{flex-basis:100%}
.m{display:flex;flex:1;min-height:0}
.v{display:flex;flex-direction:column;flex:1;min-width:0}
rh-viewport{flex:1;min-height:0}`,
`<header><ui-icon name="rhino"></ui-icon>無題 - Rhinoceros 5.0 Commercial - [Perspective]<window-buttons></window-buttons></header>
<nav>${['ﾌｧｲﾙ(F)','編集(E)','ﾋﾞｭｰ(V)','曲線(C)','ｻｰﾌｪｽ(S)','ｿﾘｯﾄﾞ(O)','ﾒｯｼｭ(M)','寸法(D)','変形(T)','ﾂｰﾙ(L)','解析(A)','ﾚﾝﾀﾞﾘﾝｸﾞ(R)','ﾊﾟﾈﾙ(P)','Clayoo','T-Splines','Flamingo nXt 5.0','ﾍﾙﾌﾟ(H)'].map(t=>`<a href="#">${t}</a>`).join('')}</nav>
<rh-command></rh-command><rh-toolbars></rh-toolbars>
<div class="m"><rh-side></rh-side><div class="v"><rh-viewport></rh-viewport><rh-viewtabs></rh-viewtabs></div><rh-dock></rh-dock></div>
<rh-osnap></rh-osnap><rh-status></rh-status>`);

element('rh-command',`:host{display:block;flex:none;padding:1px 2px 3px;border-left:4px double #c8ccd6;border-bottom:1px solid #c4c8d2;border-top:2px solid #e8eaee;font:12px/17px "Liberation Sans","Noto Sans CJK JP",sans-serif}
.h{display:flex;background:#fff;height:37px;border-bottom:1px solid #a8b0bc}.h div{flex:1;padding:1px 0 0 1px;white-space:nowrap}
.sb{width:15px;background:#f0f0f0;display:flex;flex-direction:column;justify-content:space-between;align-items:center;padding:6px 0}.sb svg{width:8px;height:6px}
.c{display:flex;align-items:center;background:#fff;height:17px}label{font-weight:700}
input{flex:1;border:0;outline:0;padding:0 3px;height:15px;background:none;min-width:0}
.sp{display:flex;flex-direction:column;gap:1px}.sp button{width:14px;height:7px;background:#e4e4e4;border:1px solid #999;display:grid;place-items:center}
.sp svg{width:6px;height:3px}`,
`<div class="h"><div>Image tile saved: C:¥Users¥shini¥AppData¥Local¥Temp¥d658efc2-99db-4a65-948a-af3896345a90¥0;0.png<br>Image tile saved: C:¥Users¥shini¥AppData¥Local¥Temp¥d658efc2-99db-4a65-948a-af3896345a90¥1;0.png</div><span class="sb"><svg viewBox="0 0 8 6"><path d="M1 5L4 2L7 5" fill="none" stroke="#444" stroke-width="2"/></svg><svg viewBox="0 0 8 6"><path d="M1 1L4 4L7 1" fill="none" stroke="#444" stroke-width="2"/></svg></span></div>
<div class="c"><label for="cmd">ｺﾏﾝﾄﾞ:</label><input id="cmd" value="|"><span class="sp"><button aria-label="up"><svg viewBox="0 0 6 3"><path d="M0 3L3 0L6 3Z"/></svg></button><button aria-label="down"><svg viewBox="0 0 6 3"><path d="M0 0L3 3L6 0Z"/></svg></button></span></div>`);

const STD='new folder disk* print props cut copy paste undo* hand orbit zoom zoomw zoome zooms zoomp* four* car* cplane* setpt* shapes* bulb* lock* layer* wheel* sph1 sph2* sph3*'.split(' ');
const btn=n=>`<tool-button icon="${n.replace('*','')}"${n.endsWith('*')?' fly':''}></tool-button>`;
element('rh-toolbars',`:host{display:block;flex:none}
.r{display:flex;height:60px;border-bottom:1px solid #c8ccd6}
.s{width:805px;border-left:4px double #c8ccd6;border-right:1px solid #c4c8d2;padding:4px 0 0 2px;display:flex;flex-direction:column;margin-right:4px}
.t{display:flex;height:17px;font:12px/17px "Noto Sans CJK JP",sans-serif;overflow:hidden}
.t button{flex:1 1 auto;position:relative;background:#d3d9ec;border-top:1px solid #b0b6c4;padding:0;line-height:16px;white-space:nowrap}
.t button::after{content:"";position:absolute;right:-5px;top:-2px;width:1px;height:22px;background:#a0a6b4;transform:rotate(30deg);z-index:1}
.t button.on{background:#fff}.t .x{flex:0 0 20px}.t .x::after{display:none}
.b{display:flex;justify-content:space-between;align-items:center;height:31px;background:linear-gradient(#fff,#eef0f6);padding:0 12px 0 1px}
.e{flex:1;border-left:4px double #c8ccd6;margin:4px 1px 0 0;padding:0 4px;display:flex;gap:3px;align-items:flex-start;background:linear-gradient(#fff,#eaecf2)}
.e div{display:flex;gap:3px;align-items:center;font:12px/24px "Open Sans",sans-serif}
.q{display:flex;justify-content:space-between;align-items:center;height:36px;margin-right:8px;border-left:4px double #c8ccd6;padding:0 6px 3px 3px;background:linear-gradient(#fff,#e6e8ef)}
b{font:700 15px/16px "Open Sans",sans-serif}.q b{margin-left:3px}`,
`<div class="r"><div class="s"><div class="t">${['標準','作業平面','ﾋﾞｭｰの設定','表示','選択','ﾋﾞｭｰﾎﾟｰﾄﾚｲｱｳﾄ','表示/非表示','変形','曲線ﾂｰﾙ','ｻｰﾌｪｽﾂｰﾙ','ｿﾘｯﾄﾞﾂｰﾙ','ﾒｯｼｭﾂｰﾙ'].map((t,i)=>`<button${i?'':' class="on"'}>${t}</button>`).join('')}<button class="x">»</button><ui-icon name="gear" style="width:17px;height:17px"></ui-icon></div>
<div class="b">${STD.map(btn).join('')}<b>»</b></div></div>
<div class="e"><div><tool-button icon="swirl"></tool-button><tool-button icon="dots"></tool-button>Rebuild</div><b style="margin:4px 0 0 8px">»</b></div></div>
<div class="q">${Array.from({length:33},(_,i)=>btn('t'+(i+1)+(i===2||i===30?'*':''))).join('')}<b>»</b></div>`);

element('rh-side',`:host{display:grid;grid-template-columns:28px 28px;grid-template-rows:repeat(18,1fr);width:63px;height:501px;margin-top:6px;border-top:4px double #c8ccd6;flex:none;justify-items:center;align-items:center}`,
Array.from({length:36},(_,i)=>`<tool-button icon="s${i+1}"${[0,16,17,18,19,21,22].includes(i)?'':' fly'}></tool-button>`).join(''));

/* Perspective view: a plane-to-screen projection fixed by four reference points (grid step = 5 units) */
const VIEW=(()=>{const[x0,y0]=[100.8,385.4],[x1,y1]=[470.6,602.3],[x2,y2]=[694.7,301.1],[x3,y3]=[353.8,140.2];
 const dx1=x1-x2,dx2=x3-x2,sx=x0-x1+x2-x3,dy1=y1-y2,dy2=y3-y2,sy=y0-y1+y2-y3,D=dx1*dy2-dx2*dy1;
 const g=(sx*dy2-dx2*sy)/D,h=(dx1*sy-sx*dy1)/D,a=x1-x0+g*x1,b=x3-x0+h*x3,d=y1-y0+g*y1,e=y3-y0+h*y3;
 const w=(i,j)=>1+g*i/9+h*j/9;
 return{w,p:(i,j)=>{const W=w(i,j);return[(a*i/9+b*j/9+x0)/W,(d*i/9+e*j/9+y0)/W]}}})();
const SIZES=[[21,14.5,24,21,23,21,16,12,19.5,13.5],[17,5,18,15,6,19,10,18,21,17],[13,8,1,4,7,9,1,11,5,24],[9,1,16,4,17,1,1,14,8,9],[1,9,13,21,1,1,9,14,18,1],[1,9,21,16,10,13,14,17,13,14],[15,5,8,18,1,16,9,14,21,5],[16,19,7,1,8,1,16,1,1,6],[1,11,14,4,18,22,1,22,16,4],[10,4,20,17,14,20,1,17,20,9]];
function scene(){
 const f=(i,j)=>VIEW.p(i,j).map(n=>n.toFixed(1)).join(' ');let mi='',ma='',ci='',cr='';
 for(let k=-70;k<=70;k++){const l=`M${f(k/5,-14)}L${f(k/5,14)}M${f(-14,k/5)}L${f(14,k/5)}`;k%5?mi+=l:ma+=l}
 SIZES.forEach((row,j)=>row.forEach((s,i)=>{const r=s*VIEW.w(i,j)/8.1/5;
  if(s>1){let d='';for(let n=0;n<48;n++){const t=n*Math.PI/24;d+=(n?'L':'M')+f(i+r*Math.cos(t),j+r*Math.sin(t))}ci+=d+'Z'}
  const[x,y]=VIEW.p(i,j),q=s>1?4:3.5;cr+=`M${x-q} ${y-q}L${x+q} ${y+q}M${x+q} ${y-q}L${x-q} ${y+q}`}));
 return `<path d="${mi}" stroke="#8f959c" stroke-opacity=".45"/><path d="${ma}" stroke="#858a90"/><path d="M${f(0,0)}L${f(0,14)}" stroke="#3f9a48" stroke-width="1.5"/><path d="M${f(0,0)}L${f(14,0)}" stroke="#a03a3a" stroke-width="1.8"/><path d="${ci}" stroke="#9c0a0e" stroke-width="1.6"/><path d="${cr}" stroke="#9c0a0e" stroke-width="2.6"/>`}
element('rh-viewport',`:host{position:relative;display:block;overflow:hidden;background:#9da3aa;margin-top:4px}
svg{position:absolute;inset:0;width:100%;height:100%}
button{position:relative;display:flex;align-items:center;height:18px;padding:0 3px 0 8px;background:#85a2c6;color:#10203a}
button i{width:1px;height:14px;background:#111;margin:0 2px 0 7px}button em{border:4px solid transparent;border-top:5px solid #111;border-bottom:0}`,
`<svg fill="none">${scene()}<path d="M37 651V680M36 678L45 662M37 678L60 692" stroke="#6e7378" stroke-width="1.4"/><g fill="#6e7378" font-size="14" font-family="Open Sans"><text x="38" y="661">z</text><text x="53" y="661">y</text><text x="62" y="694">x</text></g></svg><button>Perspective<i></i><em></em></button>`);
element('rh-viewtabs',`:host{display:flex;height:21px;flex:none;padding-bottom:1px}
button{line-height:18px;height:20px;padding:0 4px 0 9px;background:#d3d8ea;border:1px solid #b8bdca;border-top:0;clip-path:polygon(0 0,100% 0,100% 100%,8px 100%)}
button.on{background:#fff}button:last-child{background:#e6e8ee;padding:3px 8px 0 10px}`,
`<button class="on">Perspective</button><button>Top</button><button>Front</button><button>Right</button><button aria-label="add"><svg width="12" height="12" viewBox="0 0 12 12"><path d="M4.5 1H7.5V4.5H11V7.5H7.5V11H4.5V7.5H1V4.5H4.5Z" fill="#fff" stroke="#777"/></svg></button>`);
element('rh-osnap',`:host{display:flex;align-items:center;gap:7px;height:38px;flex:none;margin-top:-3px;border-left:4px double #c8ccd6;padding-left:6px;font:12px/16px "Noto Sans CJK JP",sans-serif}
label{display:flex;align-items:center;gap:4px;white-space:nowrap}
input{appearance:none;width:13px;height:13px;margin:0;border:1px solid #333;background:#fff;display:grid;place-items:center}
input:checked::before{content:"";width:9px;height:5px;border:solid #333;border-width:0 0 1px 1px;transform:translateY(-1px) rotate(-45deg)}
input:disabled{background:#d8d8d8;border-color:#bbb}`,
[['端点',1],['近接点',1],['点',1],['中点',1],['中心点',0],['交点',1],['垂直点',0],['接点',1],['四半円点',1],['ﾉｯﾄ',0],['頂点',0],['投影',2],['無効',2]].map(([t,c])=>`<label><input type="checkbox"${c===1?' checked':c===2?' disabled':''}>${t}</label>`).join(''));
element('rh-status',`:host{display:grid;grid-template-columns:58px 69px 69px 69px 69px 1fr 73px 57px 57px 42px 58px 56px 72px 37px 22px;height:20px;flex:none;border-top:2px solid #c4c8d2;font:12px/17px Roboto,"Noto Sans CJK JP",sans-serif;margin-top:3px}
span{border-right:1px solid #b4b8c4;text-align:center;white-space:nowrap;overflow:hidden;padding:0 2px}
.b{background:#dff1fb;font-weight:700;text-align:left;padding:0 3px}.l{text-align:left;display:flex;gap:2px;align-items:center}i{width:13px;height:13px;background:#000}`,
`<span>作業平面</span><span>x -21.666</span><span>y 40.132</span><span>z 0.000</span><span>ﾐﾘﾒｰﾄﾙ</span><span class="l"><i></i>ﾃﾞﾌｫﾙﾄ</span><span class="b">ｸﾞﾘｯﾄﾞｽﾅｯﾌﾟ</span><span>直交ﾓｰﾄﾞ</span><span class="b">平面ﾓｰﾄﾞ</span><span class="b">Osnap</span><span class="b">ｽﾏｰﾄﾄﾗｯｸ</span><span class="b">ｶﾞﾑﾎﾞｰﾙ</span><span>ﾋｽﾄﾘを記録</span><span>ﾌｨﾙﾀ</span><span></span>`);

const ROWS=[['ﾋﾞｭｰﾎﾟｰﾄ'],['ﾀ...','Pers...'],['幅','784','d'],['高...','725','d'],['投...','ﾊ...','s'],['ｶﾒﾗ'],['ﾚ...','50.0'],['回...','0.0'],['X...','77.9...'],['Y...','-61...'],['Z...','119...'],['位...','配...','b'],['ﾀｰｹﾞｯﾄ'],['X...','25.1...'],['Y...','15.1...'],['Z...','6.674'],['位...','配...','b']];
element('rh-dock',`:host{display:flex;flex-direction:column;width:97px;margin:7px 1px 0 7px;flex:none;font:12px/16px Roboto,"Noto Sans CJK JP",sans-serif}
.p{border:1px solid #b0b6c6;border-top:4px double #c8ccd6;display:flex;flex-direction:column}
.p1{height:379px}.p2{margin-top:12px;height:338px;flex:none}
.tabs{display:flex;height:20px;flex:none;background:#dfe2ea}
.tabs button{flex:0 0 35px;background:#d3d9ec;border-left:1px solid #a8aebc;border-top:1px solid #a8aebc;clip-path:polygon(0 0,70% 0,100% 100%,0 100%);display:flex;align-items:center;padding-left:3px;gap:3px;margin-right:-6px}
.tabs .a{flex-basis:50px;background:#fff}.tabs .d{flex-basis:38px}.tabs ui-icon{width:15px;height:15px;align-self:center}
.tabs .w{flex:0 0 80px;background:#fff;clip-path:polygon(0 0,80% 0,100% 100%,0 100%);margin:0}
.tb{display:flex;justify-content:space-between;align-items:center;height:20px;background:#f4f5f9;flex:none;border-bottom:1px solid #ccc;padding:0 3px}.tb tool-button{width:18px;height:18px}
.l{flex:1;background:#fff;padding:4px 5px}.l p{margin:0 0 3px}.l b{display:block;padding-left:4px;border-bottom:1px dotted #ccc}
.hs{height:15px;background:#f0f0f0;display:flex;align-items:center;padding:0 5px;flex:none}.hs i{width:17px;height:15px;background:#ccc;margin:0 auto 0 5px}.hs svg,.vs svg{width:8px;height:8px;flex:none}
.c{display:flex;flex:1;min-height:0;overflow:hidden;background:#fff;padding:6px 2px 0 4px;gap:2px}
table{border-collapse:collapse;width:72px;height:316px;table-layout:fixed}
td,th{padding:0 0 0 2px;border:1px solid #e0e3ec;white-space:nowrap;overflow:hidden;font-weight:400;text-align:left;line-height:15px}
th{background:#f6f6f8;padding-left:1px}td:first-child{padding-left:10px}
.d td{color:#999}.d td:last-child{background:#dfe2ea}
td button{display:block;width:100%;background:#e2e2e2;border:1px solid #aaa;line-height:15px}
select{appearance:none;flex:1;min-width:0;border:0;background:none;padding:0;display:block}td div{display:flex;align-items:center}td div svg{width:14px;height:14px;background:#eee;border:1px solid #bbb;flex:none;padding:2px}
.vs{width:15px;background:#f4f4f4;display:flex;flex-direction:column;align-items:center;padding-top:6px;height:304px}.vs i{width:15px;height:216px;background:#cdcdcd;margin:2px 0 auto}`,
`<div class="p p1"><div class="tabs"><button aria-label="help"><ui-icon name="help"></ui-icon></button><button aria-label="osnap"><ui-icon name="magnet"></ui-icon></button><button aria-label="mesh"><ui-icon name="patch"></ui-icon></button></div>
<div class="tabs"><button class="a" aria-label="layers"><ui-icon name="layer"></ui-icon></button><button class="d" aria-label="display"><ui-icon name="screen"></ui-icon></button><ui-icon name="gear" style="margin-left:4px"></ui-icon></div>
<div class="tb"><tool-button icon="new"></tool-button><tool-button icon="dup"></tool-button><tool-button icon="del"></tool-button><tool-button icon="up"></tool-button></div>
<div class="l"><p>名前</p><b>ﾃﾞﾌｫﾙﾄ</b></div><div class="hs"><svg viewBox="0 0 8 8"><path d="M5.5 1L2.5 4L5.5 7" fill="none" stroke="#444" stroke-width="1.6"/></svg><i></i><svg viewBox="0 0 8 8"><path d="M2.5 1L5.5 4L2.5 7" fill="none" stroke="#444" stroke-width="1.6"/></svg></div></div>
<div class="p p2"><div class="tabs"><button class="w"><ui-icon name="wheel"></ui-icon>ﾌﾟﾛﾊﾟﾃｨ</button><ui-icon name="gear"></ui-icon></div>
<div class="c"><table><colgroup><col style="width:33px"><col></colgroup>${ROWS.map(([a,b,k])=>b?`<tr class="${k||''}"><td>${a}</td><td>${k==='b'?`<button>${b}</button>`:k==='s'?`<div><select aria-label="projection"><option>${b}</option></select><svg viewBox="0 0 8 8"><path d="M1 3L4 6L7 3" fill="none" stroke="#555"/></svg></div>`:b}</td></tr>`:`<tr><th colspan="2">${a}</th></tr>`).join('')}</table>
<div class="vs"><svg viewBox="0 0 8 8"><path d="M1 5.5L4 2.5L7 5.5" fill="none" stroke="#444" stroke-width="1.6"/></svg><i></i><svg viewBox="0 0 8 8"><path d="M1 2.5L4 5.5L7 2.5" fill="none" stroke="#444" stroke-width="1.6"/></svg></div></div></div>`);
</script>
</body>
</html>
